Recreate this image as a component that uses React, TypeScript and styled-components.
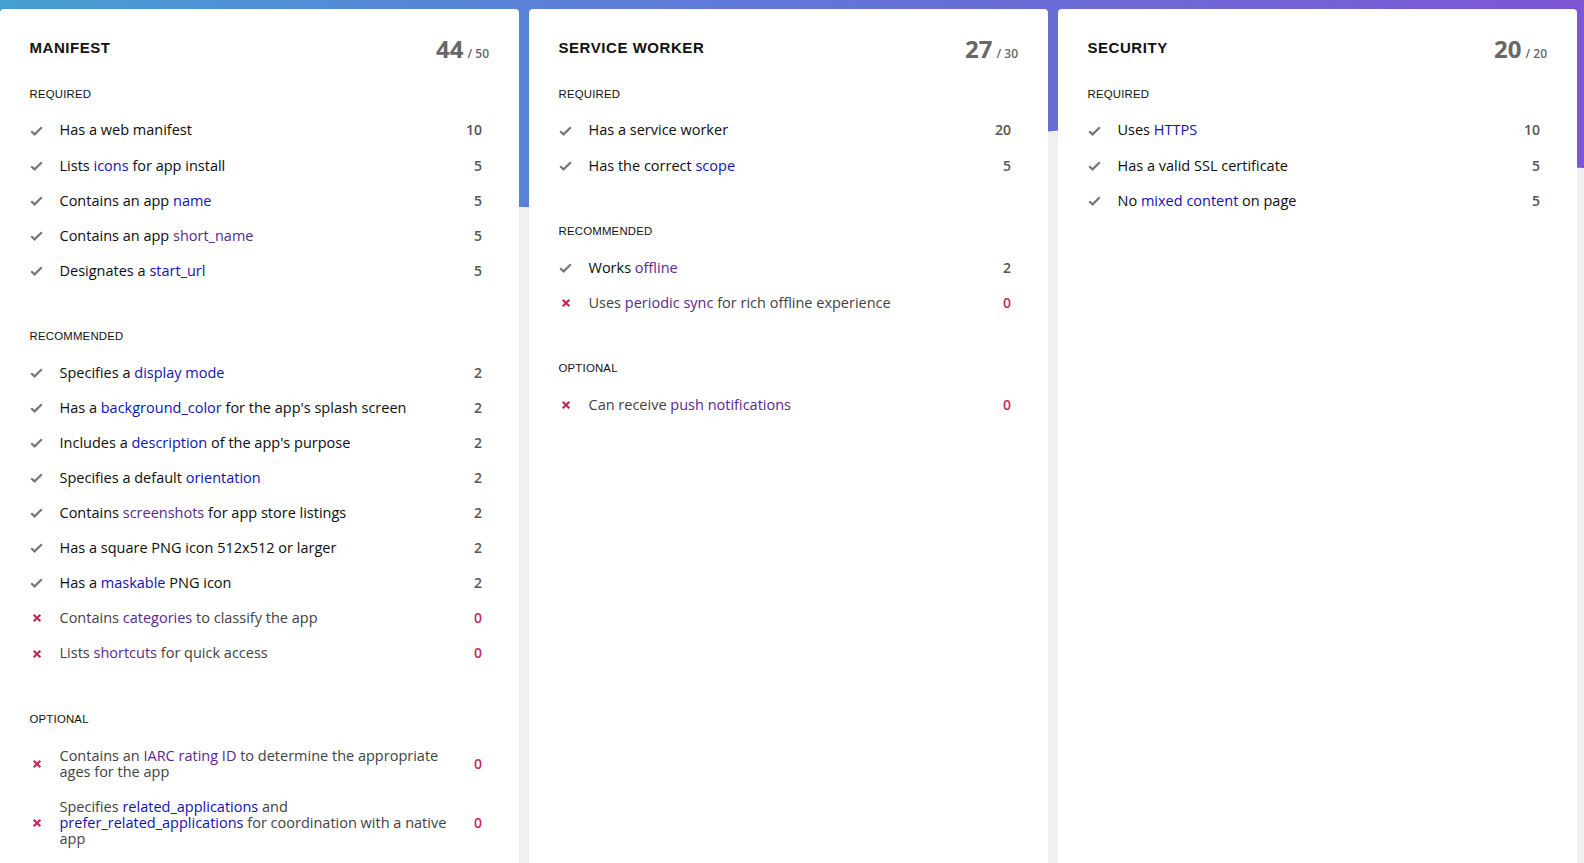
import React from 'react';
import styled, { createGlobalStyle } from 'styled-components';

const GlobalStyle = createGlobalStyle`
    html, body {
        margin: 0;
        padding: 0;
        overflow: hidden;
        background: #f0f0f0;
    }
    body {
        font-family: "Open Sans", "Noto Sans", sans-serif;
    }
`;

const colors = {
    blue: '#1111b2',
    purple: '#58288e',
    fail: '#c8285a',
    check: '#767676',
    score: '#676767',
    passText: '#0d0d0d',
    failText: '#424242',
};

type LinkTone = 'blue' | 'purple';
type Part = string | { link: string; tone: LinkTone };

interface Audit {
    pass: boolean;
    parts: Part[];
    points: number;
}

interface Section {
    title: string;
    audits: Audit[];
}

interface Category {
    title: string;
    score: number;
    total: number;
    sections: Section[];
}

const b = (link: string): Part => ({ link, tone: 'blue' });
const p = (link: string): Part => ({ link, tone: 'purple' });

const categories: Category[] = [
    {
        title: 'MANIFEST',
        score: 44,
        total: 50,
        sections: [
            {
                title: 'REQUIRED',
                audits: [
                    { pass: true, parts: ['Has a web manifest'], points: 10 },
                    { pass: true, parts: ['Lists ', b('icons'), ' for app install'], points: 5 },
                    { pass: true, parts: ['Contains an app ', b('name')], points: 5 },
                    { pass: true, parts: ['Contains an app ', p('short_name')], points: 5 },
                    { pass: true, parts: ['Designates a ', b('start_url')], points: 5 },
                ],
            },
            {
                title: 'RECOMMENDED',
                audits: [
                    { pass: true, parts: ['Specifies a ', b('display mode')], points: 2 },
                    { pass: true, parts: ['Has a ', b('background_color'), " for the app's splash screen"], points: 2 },
                    { pass: true, parts: ['Includes a ', b('description'), " of the app's purpose"], points: 2 },
                    { pass: true, parts: ['Specifies a default ', b('orientation')], points: 2 },
                    { pass: true, parts: ['Contains ', p('screenshots'), ' for app store listings'], points: 2 },
                    { pass: true, parts: ['Has a square PNG icon 512x512 or larger'], points: 2 },
                    { pass: true, parts: ['Has a ', b('maskable'), ' PNG icon'], points: 2 },
                    { pass: false, parts: ['Contains ', p('categories'), ' to classify the app'], points: 0 },
                    { pass: false, parts: ['Lists ', p('shortcuts'), ' for quick access'], points: 0 },
                ],
            },
            {
                title: 'OPTIONAL',
                audits: [
                    { pass: false, parts: ['Contains an ', p('IARC rating ID'), ' to determine the appropriate ages for the app'], points: 0 },
                    { pass: false, parts: ['Specifies ', b('related_applications'), ' and ', b('prefer_related_applications'), ' for coordination with a native app'], points: 0 },
                ],
            },
        ],
    },
    {
        title: 'SERVICE WORKER',
        score: 27,
        total: 30,
        sections: [
            {
                title: 'REQUIRED',
                audits: [
                    { pass: true, parts: ['Has a service worker'], points: 20 },
                    { pass: true, parts: ['Has the correct ', b('scope')], points: 5 },
                ],
            },
            {
                title: 'RECOMMENDED',
                audits: [
                    { pass: true, parts: ['Works ', p('offline')], points: 2 },
                    { pass: false, parts: ['Uses ', p('periodic sync'), ' for rich offline experience'], points: 0 },
                ],
            },
            {
                title: 'OPTIONAL',
                audits: [
                    { pass: false, parts: ['Can receive ', p('push notifications')], points: 0 },
                ],
            },
        ],
    },
    {
        title: 'SECURITY',
        score: 20,
        total: 20,
        sections: [
            {
                title: 'REQUIRED',
                audits: [
                    { pass: true, parts: ['Uses ', b('HTTPS')], points: 10 },
                    { pass: true, parts: ['Has a valid SSL certificate'], points: 5 },
                    { pass: true, parts: ['No ', b('mixed content'), ' on page'], points: 5 },
                ],
            },
        ],
    },
];

const Page = styled.div`
    position: relative;
    min-height: 100vh;
`;

const Backdrop = styled.svg`
    position: absolute;
    top: 0;
    left: 0;
    width: 100%;
    height: 220px;
    z-index: 0;
`;

const Columns = styled.main`
    position: relative;
    z-index: 1;
    display: flex;
    gap: 10px;
    padding-top: 9px;
`;

const Card = styled.section`
    flex: 0 0 519px;
    box-sizing: border-box;
    min-height: calc(100vh - 9px);
    background: #ffffff;
    border-radius: 4px 4px 0 0;
    padding: 26.5px 30px 30px 29.5px;
`;

const Header = styled.header`
    display: flex;
    align-items: center;
    justify-content: space-between;
    height: 24px;
`;

const Title = styled.h2`
    margin: 0;
    font-family: "Liberation Sans", Arial, sans-serif;
    font-size: 15px;
    font-weight: 700;
    color: #111;
    letter-spacing: 0.55px;
`;

const Score = styled.div`
    display: flex;
    align-items: baseline;
    gap: 4px;
    margin-top: 3px;
    color: ${colors.score};
`;

const ScoreValue = styled.span`
    font-size: 24px;
    font-weight: 700;
    line-height: 1;
`;

const ScoreTotal = styled.span`
    font-size: 12px;
    font-weight: 600;
`;

const Sections = styled.div`
    display: flex;
    flex-direction: column;
    gap: 39.5px;
    margin-top: 26px;
`;

const SectionLabel = styled.h3`
    margin: 0 0 11.5px;
    font-family: "Liberation Sans", Arial, sans-serif;
    font-size: 11.4px;
    font-weight: 500;
    line-height: 16px;
    color: #111;
    letter-spacing: 0.2px;
`;

const List = styled.ul`
    list-style: none;
    margin: 0;
    padding: 0;
`;

const Row = styled.li<{ $pass: boolean }>`
    display: flex;
    align-items: center;
    padding: 9.45px 7px 9.45px 0;
    font-size: 14.5px;
    line-height: 16.2px;
    color: ${props => (props.$pass ? colors.passText : colors.failText)};
`;

const IconBox = styled.span`
    flex: 0 0 30px;
    display: flex;
    align-items: center;
`;

const Text = styled.span`
    flex: 1;
`;

const Link = styled.a<{ $tone: LinkTone }>`
    color: ${props => colors[props.$tone]};
    text-decoration: none;
`;

const Points = styled.span<{ $pass: boolean }>`
    flex: 0 0 26px;
    text-align: right;
    font-size: 14px;
    font-weight: 600;
    color: ${props => (props.$pass ? '#555' : colors.fail)};
`;

const CheckIcon = () => (
    <svg width="13" height="10" viewBox="0 0 13 10">
        <path d="M1.2 5.2 L4.6 8.4 L11.8 1.3" fill="none" stroke={colors.check} strokeWidth="2.2" />
    </svg>
);

const CrossIcon = () => (
    <svg width="10" height="10" viewBox="0 0 10 10" style={{ marginLeft: 2 }}>
        <path d="M1.7 1.7 L8.3 8.3 M8.3 1.7 L1.7 8.3" fill="none" stroke={colors.fail} strokeWidth="2.2" />
    </svg>
);

const AuditRow: React.FC<{ audit: Audit }> = ({ audit }) => (
    <Row $pass={audit.pass}>
        <IconBox>{audit.pass ? <CheckIcon /> : <CrossIcon />}</IconBox>
        <Text>
            {audit.parts.map((part, i) =>
                typeof part === 'string'
                    ? <React.Fragment key={i}>{part}</React.Fragment>
                    : <Link key={i} href="#" $tone={part.tone}>{part.link}</Link>
            )}
        </Text>
        <Points $pass={audit.pass}>{audit.points}</Points>
    </Row>
);

const CategoryCard: React.FC<{ category: Category }> = ({ category }) => (
    <Card>
        <Header>
            <Title>{category.title}</Title>
            <Score>
                <ScoreValue>{category.score}</ScoreValue>
                <ScoreTotal>/ {category.total}</ScoreTotal>
            </Score>
        </Header>
        <Sections>
            {category.sections.map(section => (
                <div key={section.title}>
                    <SectionLabel>{section.title}</SectionLabel>
                    <List>
                        {section.audits.map((audit, i) => <AuditRow key={i} audit={audit} />)}
                    </List>
                </div>
            ))}
        </Sections>
    </Card>
);

export default function App() {
    return (
        <Page>
            <GlobalStyle />
            <Backdrop viewBox="0 0 1584 220" preserveAspectRatio="none">
                <defs>
                    <linearGradient id="band" x1="0" y1="0" x2="1" y2="0">
                        <stop offset="0" stopColor="#479fd1" />
                        <stop offset="0.34" stopColor="#5a80d8" />
                        <stop offset="0.67" stopColor="#6a6bd6" />
                        <stop offset="1" stopColor="#7e56d6" />
                    </linearGradient>
                </defs>
                <path
                    d="M0 0 H1584 V168 C1450 160 1200 118 1053 131 C900 145 700 212 523 207 C350 202 150 170 0 160 Z"
                    fill="url(#band)"
                />
            </Backdrop>
            <Columns>
                {categories.map(category => <CategoryCard key={category.title} category={category} />)}
            </Columns>
        </Page>
    );
}
